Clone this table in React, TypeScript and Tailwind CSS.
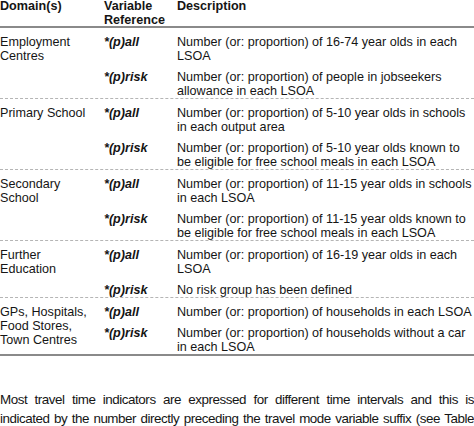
const groups = [
  {
    domain: ["Employment", "Centres"],
    rows: [
      { ref: "*(p)all", desc: ["Number (or: proportion) of 16-74 year olds in each", "LSOA"] },
      { ref: "*(p)risk", desc: ["Number (or: proportion) of people in jobseekers", "allowance in each LSOA"] },
    ],
  },
  {
    domain: ["Primary School"],
    rows: [
      { ref: "*(p)all", desc: ["Number (or: proportion) of 5-10 year olds in schools", "in each output area"] },
      { ref: "*(p)risk", desc: ["Number (or: proportion) of 5-10 year olds known to", "be eligible for free school meals in each LSOA"] },
    ],
  },
  {
    domain: ["Secondary", "School"],
    rows: [
      { ref: "*(p)all", desc: ["Number (or: proportion) of 11-15 year olds in schools", "in each LSOA"] },
      { ref: "*(p)risk", desc: ["Number (or: proportion) of 11-15 year olds known to", "be eligible for free school meals in each LSOA"] },
    ],
  },
  {
    domain: ["Further", "Education"],
    rows: [
      { ref: "*(p)all", desc: ["Number (or: proportion) of 16-19 year olds in each", "LSOA"] },
      { ref: "*(p)risk", desc: ["No risk group has been defined"] },
    ],
  },
  {
    domain: ["GPs, Hospitals,", "Food Stores,", "Town Centres"],
    rows: [
      { ref: "*(p)all", desc: ["Number (or: proportion) of households in each LSOA"] },
      { ref: "*(p)risk", desc: ["Number (or: proportion) of households without a car", "in each LSOA"] },
    ],
  },
];

function Lines({ lines }: { lines: string[] }) {
  return (
    <>
      {lines.map((l, i) => (
        <div key={i} className="whitespace-nowrap">
          {l}
        </div>
      ))}
    </>
  );
}

export default function App() {
  return (
    <div
      className="w-[474px] h-[426px] overflow-hidden bg-white text-[#151515] text-[12.6px] leading-[14px]"
      style={{ fontFamily: '"Liberation Sans", Arial, sans-serif' }}
    >
      {/* header */}
      <div className="grid grid-cols-[104px_73px_1fr] -mt-[1px] font-bold">
        <div>Domain(s)</div>
        <div>
          <div>Variable</div>
          <div>Reference</div>
        </div>
        <div>Description</div>
      </div>
      <div className="h-[2px] bg-[#8a8a8a] -mt-[1px]" />

      {groups.map((g, gi) => (
        <div
          key={gi}
          className={`grid grid-cols-[104px_1fr] ${gi < groups.length - 1 ? "border-b border-dashed border-[#b5b5b5]" : ""}`}
        >
          <div className="pt-[7px]">
            <Lines lines={g.domain} />
          </div>
          <div>
            {g.rows.map((r, ri) => (
              <div key={ri} className="grid grid-cols-[73px_1fr] pt-[7px]">
                <div className="font-bold italic">{r.ref}</div>
                <div>
                  <Lines lines={r.desc} />
                </div>
              </div>
            ))}
          </div>
        </div>
      ))}
      <div className="h-[2px] bg-[#8a8a8a]" />

      <div className="mt-[34px] w-[474px] text-[13.4px] leading-[19px] tracking-[-0.45px]">
        <div className="text-justify [text-align-last:justify] whitespace-nowrap">
          Most travel time indicators are expressed for different time intervals and this is
        </div>
        <div className="text-justify [text-align-last:justify]">
          indicated by the number directly preceding the travel mode variable suffix (see Table
        </div>
      </div>
    </div>
  );
}
